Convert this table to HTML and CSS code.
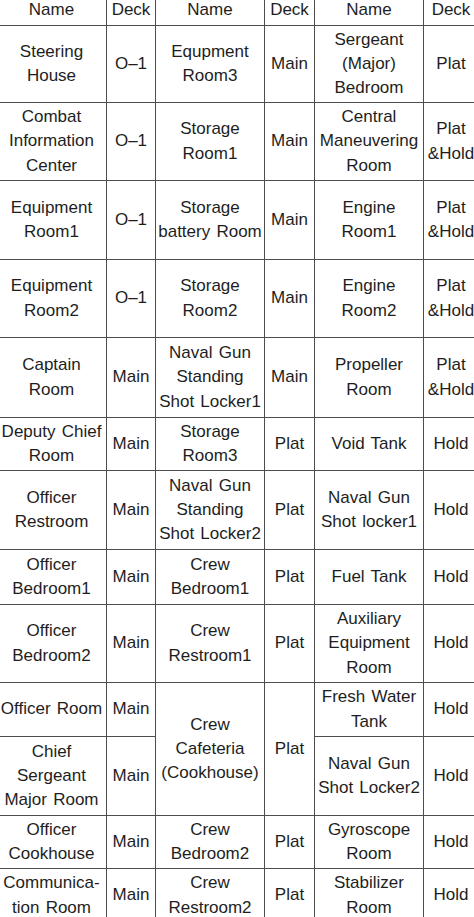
FILE: index.html
```html
<!DOCTYPE html>
<html>
<head>
<meta charset="utf-8">
<link rel="stylesheet" href="styles.css">
</head>
<body>
<div class="table">
  <div class="cell">Name</div><div class="cell">Deck</div><div class="cell">Name</div><div class="cell">Deck</div><div class="cell">Name</div><div class="cell">Deck</div>

  <div class="cell">Steering<br>House</div><div class="cell">O–1</div><div class="cell">Equpment<br>Room3</div><div class="cell">Main</div><div class="cell">Sergeant<br>(Major)<br>Bedroom</div><div class="cell">Plat</div>

  <div class="cell">Combat<br>Information<br>Center</div><div class="cell">O–1</div><div class="cell">Storage<br>Room1</div><div class="cell">Main</div><div class="cell">Central<br>Maneuvering<br>Room</div><div class="cell">Plat<br>&amp;Hold</div>

  <div class="cell">Equipment<br>Room1</div><div class="cell">O–1</div><div class="cell">Storage<br>battery Room</div><div class="cell">Main</div><div class="cell">Engine<br>Room1</div><div class="cell">Plat<br>&amp;Hold</div>

  <div class="cell">Equipment<br>Room2</div><div class="cell">O–1</div><div class="cell">Storage<br>Room2</div><div class="cell">Main</div><div class="cell">Engine<br>Room2</div><div class="cell">Plat<br>&amp;Hold</div>

  <div class="cell">Captain<br>Room</div><div class="cell">Main</div><div class="cell">Naval Gun<br>Standing<br>Shot Locker1</div><div class="cell">Main</div><div class="cell">Propeller<br>Room</div><div class="cell">Plat<br>&amp;Hold</div>

  <div class="cell">Deputy Chief<br>Room</div><div class="cell">Main</div><div class="cell">Storage<br>Room3</div><div class="cell">Plat</div><div class="cell">Void Tank</div><div class="cell">Hold</div>

  <div class="cell">Officer<br>Restroom</div><div class="cell">Main</div><div class="cell">Naval Gun<br>Standing<br>Shot Locker2</div><div class="cell">Plat</div><div class="cell">Naval Gun<br>Shot locker1</div><div class="cell">Hold</div>

  <div class="cell">Officer<br>Bedroom1</div><div class="cell">Main</div><div class="cell">Crew<br>Bedroom1</div><div class="cell">Plat</div><div class="cell">Fuel Tank</div><div class="cell">Hold</div>

  <div class="cell">Officer<br>Bedroom2</div><div class="cell">Main</div><div class="cell">Crew<br>Restroom1</div><div class="cell">Plat</div><div class="cell">Auxiliary<br>Equipment<br>Room</div><div class="cell">Hold</div>

  <div class="cell">Officer Room</div><div class="cell">Main</div><div class="cell span2">Crew<br>Cafeteria<br>(Cookhouse)</div><div class="cell span2">Plat</div><div class="cell">Fresh Water<br>Tank</div><div class="cell">Hold</div>

  <div class="cell">Chief<br>Sergeant<br>Major Room</div><div class="cell">Main</div><div class="cell">Naval Gun<br>Shot Locker2</div><div class="cell">Hold</div>

  <div class="cell">Officer<br>Cookhouse</div><div class="cell">Main</div><div class="cell">Crew<br>Bedroom2</div><div class="cell">Plat</div><div class="cell">Gyroscope<br>Room</div><div class="cell">Hold</div>

  <div class="cell">Communica-<br>tion Room</div><div class="cell">Main</div><div class="cell">Crew<br>Restroom2</div><div class="cell">Plat</div><div class="cell">Stabilizer<br>Room</div><div class="cell">Hold</div>
</div>
</body>
</html>
```

FILE: styles.css
```css
html, body {
  margin: 0;
  padding: 0;
  overflow: hidden;
  background: #ffffff;
}

.table {
  display: grid;
  grid-template-columns: 109px 48px 108px 49px 108px 54px;
  grid-template-rows: 30px 76px 77px 78px 77px 79px 52px 78px 54px 77px 53px 78px 52px 53px;
  gap: 1px;
  width: 481px;
  margin: -5px 0 0 -3px;
  background: #4d4d4d;
  font-family: "Liberation Sans", Arial, sans-serif;
  font-size: 17px;
  line-height: 24.1px;
  word-spacing: 1.5px;
  color: #1e1e1e;
}

.cell {
  background: #ffffff;
  display: flex;
  flex-direction: column;
  justify-content: center;
  align-items: center;
  text-align: center;
  white-space: nowrap;
}

.span2 {
  grid-row: span 2;
}
```
